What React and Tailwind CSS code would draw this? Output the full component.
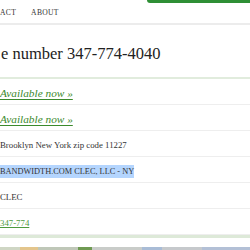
import React from 'react';

const rows = [
  { kind: 'link', text: 'Available now »' },
  { kind: 'link', text: 'Available now »' },
  { kind: 'plain', text: 'Brooklyn New York zip code 11227' },
  { kind: 'selected', text: 'BANDWIDTH.COM CLEC, LLC - NY' },
  { kind: 'plain', text: 'CLEC' },
  { kind: 'green', text: '347-774' },
];

export default function App() {
  return (
    <div className="w-[250px] h-[250px] overflow-hidden bg-white flex flex-col" style={{ fontFamily: '"Liberation Serif", "DejaVu Serif", serif' }}>
      {/* Top bar with green tab edge */}
      <div className="flex justify-end h-[3px]">
        <div className="w-[103px] h-[3px] bg-[#2f8f35] rounded-bl-[4px]"></div>
      </div>

      {/* Nav */}
      <nav className="flex items-center gap-[15px] h-[22px] border-b-2 border-[#ececec] text-[7.6px] text-[#333] tracking-[0.3px]">
        <span>ACT</span>
        <span>ABOUT</span>
      </nav>

      {/* Heading */}
      <h1 className="h-[52px] pt-[16px] pl-[1px] text-[16.5px] leading-[26px] text-[#222] whitespace-nowrap">
        e number 347-774-4040
      </h1>

      {/* Details table */}
      <div className="border-t-2 border-[#e1ecdd]">
        {rows.map((row, i) => (
          <div key={i} className="h-[26px] pt-[4px] flex items-center border-b border-[#eeeeee] whitespace-nowrap">
            {row.kind === 'link' && (
              <a className="italic text-[11.3px] text-[#3b8a2c] underline underline-offset-2">{row.text}</a>
            )}
            {row.kind === 'plain' && (
              <span className="text-[8.8px] text-[#333]">{row.text}</span>
            )}
            {row.kind === 'selected' && (
              <span className="text-[8.3px] text-[#333] bg-[#b4d5fe] leading-[13px]">{row.text}</span>
            )}
            {row.kind === 'green' && (
              <a className="text-[8.8px] text-[#4d9a3e] underline">{row.text}</a>
            )}
          </div>
        ))}
      </div>
      <div className="h-[3px] bg-[#dde9d8]"></div>

      <div className="flex-1"></div>
      {/* Strip of map image at the bottom */}
      <div className="h-[3px] flex">
        <div className="w-[20px] bg-[#cfd6c4]"></div>
        <div className="w-[18px] bg-[#e3c58c]"></div>
        <div className="w-[40px] bg-[#bfc7b8]"></div>
        <div className="w-[14px] bg-[#6f9a52]"></div>
        <div className="w-[50px] bg-[#c9ccc9]"></div>
        <div className="w-[20px] bg-[#a9bcd6]"></div>
        <div className="w-[40px] bg-[#c6c9cc]"></div>
        <div className="flex-1 bg-[#b3c0d6]"></div>
      </div>
    </div>
  );
}
